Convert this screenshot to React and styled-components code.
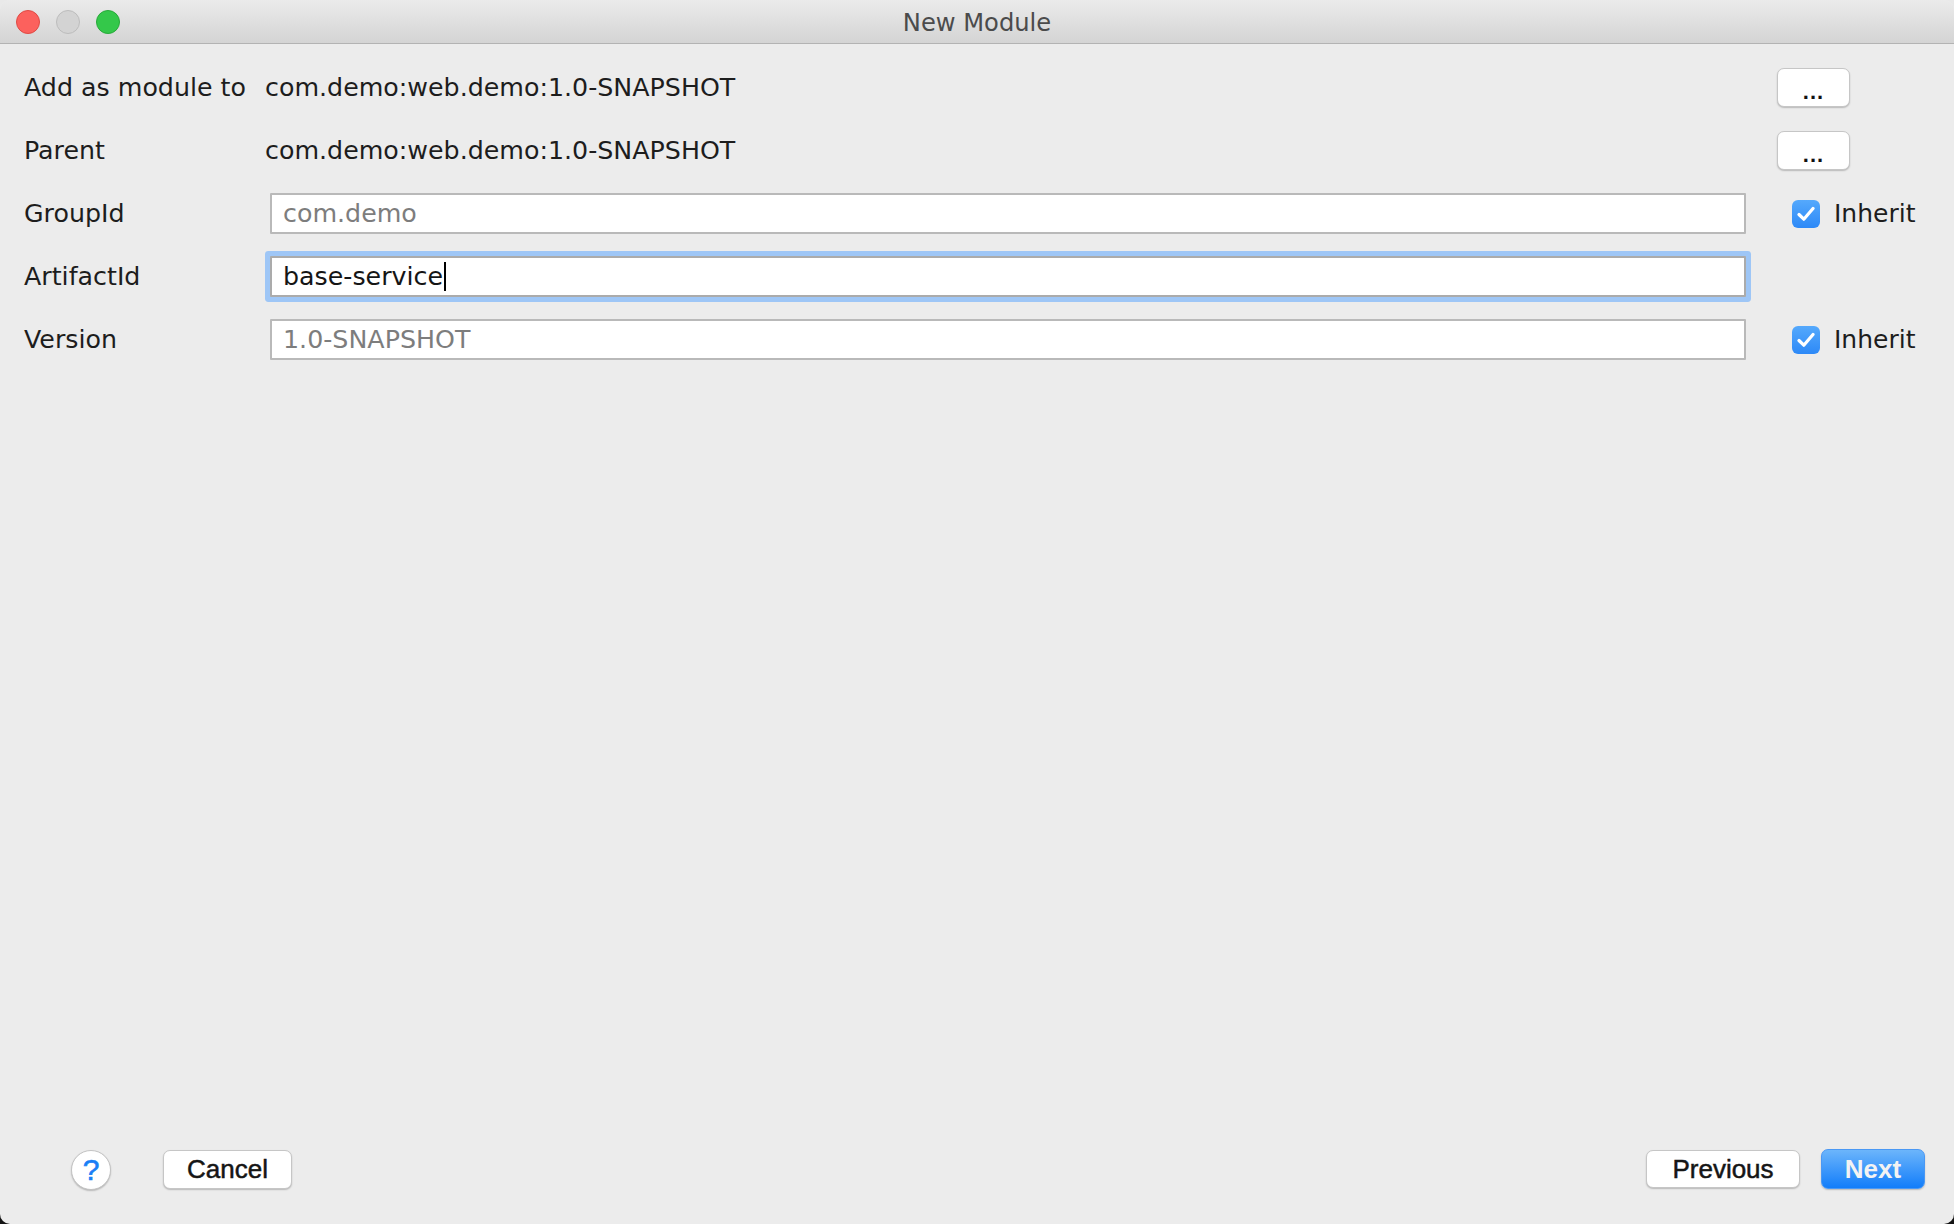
import React from "react";
import styled, { createGlobalStyle } from "styled-components";

const Global = createGlobalStyle`
  html, body { margin: 0; padding: 0; }
  html { background: linear-gradient(#e9e9e9 50%, #141414 50%); }
  body { width: 1954px; height: 1224px; overflow: hidden; }
  * { box-sizing: border-box; }
`;

const Window = styled.div`
  width: 1954px;
  height: 1224px;
  display: flex;
  flex-direction: column;
  background: #ececec;
  border-radius: 10px;
  overflow: hidden;
  font-family: "DejaVu Sans", "Noto Sans", sans-serif;
`;

const TitleBar = styled.div`
  height: 44px;
  flex: none;
  display: grid;
  grid-template-columns: 1fr auto 1fr;
  align-items: center;
  background: linear-gradient(#ebebeb, #d4d4d4);
  border-bottom: 1px solid #b3b3b3;
`;

const Lights = styled.div`
  display: flex;
  gap: 16px;
  padding-left: 16px;
  padding-top: 1px;
`;

const Light = styled.span`
  width: 24px;
  height: 24px;
  border-radius: 50%;
  background: ${(p) => p.$bg};
  border: 1px solid ${(p) => p.$bd};
`;

const Title = styled.div`
  font-size: 24.2px;
  color: #4b4b4b;
  padding-top: 2px;
`;

const Body = styled.div`
  flex: 1;
  display: grid;
  grid-template-columns: 246px 1476px 208px;
  grid-auto-rows: 41px;
  row-gap: 22px;
  align-content: start;
  padding: 23px 0 0 24px;
`;

const Label = styled.div`
  display: flex;
  align-items: center;
  font-size: 25.3px;
  color: #1d1d1d;
`;

const Value = styled.div`
  display: flex;
  align-items: center;
  margin-left: -5px;
  font-size: 25.3px;
  color: #1d1d1d;
`;

const Field = styled.div`
  display: flex;
  align-items: center;
  height: 41px;
  padding-left: 11px;
  background: #ffffff;
  border: 2px solid ${(p) => (p.$focused ? "#ababab" : "#b9b9b9")};
  border-radius: 1px;
  font-size: 25.3px;
  color: ${(p) => (p.$muted ? "#7d7d7d" : "#151515")};
  box-shadow: ${(p) => (p.$focused ? "0 0 0 5px #9ec6f6" : "none")};
`;

const Caret = styled.span`
  display: inline-block;
  width: 2px;
  height: 29px;
  margin-left: 1px;
  background: #000;
`;

const Side = styled.div`
  display: flex;
  align-items: center;
  padding-left: ${(p) => p.$pad}px;
`;

const DotsButton = styled.button`
  width: 73px;
  height: 39px;
  margin-top: -1px;
  background: #fff;
  border: 1px solid #c6c6c6;
  border-radius: 7px;
  box-shadow: 0 1px 1.5px rgba(0, 0, 0, 0.22);
  font-family: "Liberation Sans", Arial, sans-serif;
  font-weight: bold;
  font-size: 22px;
  letter-spacing: 1px;
  color: #111;
  padding: 10px 0 0 0;
  line-height: 1;
`;

const CheckBox = styled.span`
  width: 28px;
  height: 28px;
  border-radius: 6px;
  background: linear-gradient(#55a9fc, #2d89f7);
  display: flex;
  align-items: center;
  justify-content: center;
  flex: none;
`;

const CheckText = styled.span`
  margin-left: 14px;
  font-size: 25px;
  color: #1d1d1d;
`;

const Footer = styled.div`
  flex: none;
  display: flex;
  align-items: center;
  padding: 0 29px 35px 71px;
`;

const Help = styled.button`
  width: 40px;
  height: 40px;
  border-radius: 50%;
  background: #fff;
  border: 1px solid #c3c3c3;
  box-shadow: 0 1px 1.5px rgba(0, 0, 0, 0.22);
  color: #1a7ff6;
  font-family: "Liberation Sans", Arial, sans-serif;
  font-size: 30px;
  -webkit-text-stroke: 0.6px #1a7ff6;
  line-height: 1;
  padding: 0;
  display: flex;
  align-items: center;
  justify-content: center;
  margin-right: 52px;
  margin-bottom: -2px;
`;

const Button = styled.button`
  height: ${(p) => p.$h || 39}px;
  width: ${(p) => p.$w}px;
  border-radius: 7px;
  font-family: "Liberation Sans", Arial, sans-serif;
  font-size: 26px;
  padding: 0;
  margin-left: ${(p) => p.$ml || 0}px;
  background: ${(p) => (p.$primary ? "linear-gradient(#6cb5fb, #127dfa)" : "#fff")};
  border: 1px solid ${(p) => (p.$primary ? "#4a98f4" : "#c6c6c6")};
  box-shadow: 0 1px 1.5px rgba(0, 0, 0, 0.22);
  color: ${(p) => (p.$primary ? "#f3f3f3" : "#151515")};
  font-weight: ${(p) => (p.$primary ? "bold" : "normal")};
  -webkit-text-stroke: ${(p) => (p.$primary ? "0" : "0.5px #151515")};
`;

const Spacer = styled.div`
  flex: 1;
`;

const Check = () => (
  <svg width="18" height="16" viewBox="0 0 18 16">
    <path d="M2 8.5 L6.8 13.2 L16 2.5" fill="none" stroke="#fff" strokeWidth="3.2" strokeLinecap="round" strokeLinejoin="round" />
  </svg>
);

export default function App() {
  return (
    <>
      <Global />
      <Window>
        <TitleBar>
          <Lights>
            <Light $bg="#fc615d" $bd="#df4a44" />
            <Light $bg="#d3d3d3" $bd="#bcbcbc" />
            <Light $bg="#34c84a" $bd="#28a93a" />
          </Lights>
          <Title>New Module</Title>
          <div />
        </TitleBar>
        <Body>
          <Label>Add as module to</Label>
          <Value>com.demo:web.demo:1.0-SNAPSHOT</Value>
          <Side $pad={31}>
            <DotsButton>...</DotsButton>
          </Side>

          <Label>Parent</Label>
          <Value>com.demo:web.demo:1.0-SNAPSHOT</Value>
          <Side $pad={31}>
            <DotsButton>...</DotsButton>
          </Side>

          <Label>GroupId</Label>
          <Field $muted>com.demo</Field>
          <Side $pad={46}>
            <CheckBox>
              <Check />
            </CheckBox>
            <CheckText>Inherit</CheckText>
          </Side>

          <Label>ArtifactId</Label>
          <Field $focused>
            base-service
            <Caret />
          </Field>
          <Side />

          <Label>Version</Label>
          <Field $muted>1.0-SNAPSHOT</Field>
          <Side $pad={46}>
            <CheckBox>
              <Check />
            </CheckBox>
            <CheckText>Inherit</CheckText>
          </Side>
        </Body>
        <Footer>
          <Help>?</Help>
          <Button $w={129}>Cancel</Button>
          <Spacer />
          <Button $w={154} $h={38}>Previous</Button>
          <Button $w={104} $h={40} $primary $ml={21}>Next</Button>
        </Footer>
      </Window>
    </>
  );
}
